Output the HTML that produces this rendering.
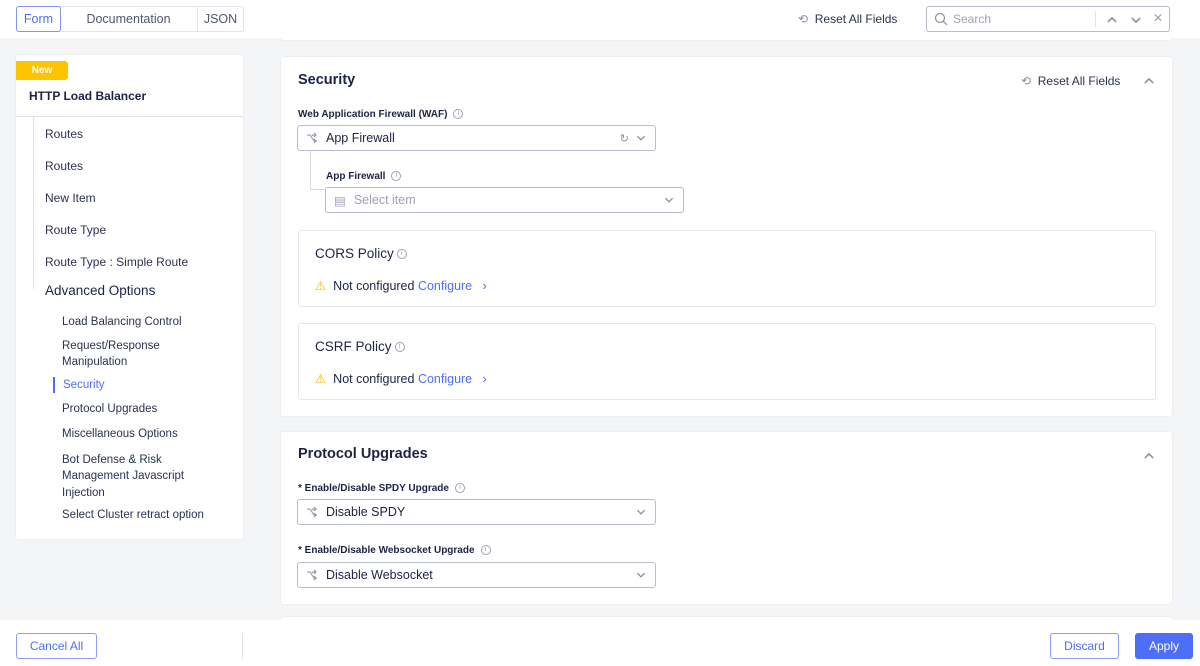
<!DOCTYPE html>
<html><head><style>
*{box-sizing:border-box;margin:0;padding:0}
body{width:1200px;height:666px;overflow:hidden;background:#f4f5f7;font-family:"Liberation Sans",sans-serif;color:#1c2345;position:relative;font-size:13px}
.abs{position:absolute}
.top{left:0;top:0;width:1200px;height:38px;background:#fff;z-index:1}
.tabs{left:16px;top:6px;height:26px;width:228px;border:1px solid #e3e5ea;border-radius:3px;display:flex;font-size:12.5px;color:#4f5672;z-index:2}
.tabs div{display:flex;align-items:center;justify-content:center}
.card{background:#fff;border-radius:3px;box-shadow:0 0 2px rgba(0,0,0,.08)}
.lbl{font-size:10px;font-weight:bold;color:#1c2345}
.sel{border:1px solid #b9bdc9;border-radius:3px;height:26px;display:flex;align-items:center;font-size:12.5px;padding-left:8px}
.info{display:inline-block;width:10px;height:10px;border:1px solid #9da2b3;border-radius:50%;font-size:7px;text-align:center;line-height:8px;color:#9da2b3;vertical-align:middle;margin-left:6px;font-weight:normal}
.nav{font-size:12px;color:#2b3250}
.btn{border:1px solid #8a9cf5;border-radius:3px;color:#4d6ef7;font-size:12px;display:flex;align-items:center;justify-content:center;background:#fff}
.z{z-index:2}
</style></head><body>
<svg width="0" height="0" style="position:absolute"><defs>
<symbol id="dn" viewBox="0 0 10 10"><path d="M2 3.5L5 6.5L8 3.5" stroke="#8a90a3" fill="none" stroke-width="1.1"/></symbol>
<symbol id="up" viewBox="0 0 10 10"><path d="M2 6.5L5 3.5L8 6.5" stroke="#8a90a3" fill="none" stroke-width="1.1"/></symbol>
<symbol id="sw" viewBox="0 0 12 12"><path d="M1 3h3l4 6h3M8 1l2 2-2 2M8 7l2 2-2 2M6 4l1-1h3" stroke="#8a90a3" fill="none" stroke-width="1"/></symbol>
</defs></svg>
<div class="abs top"></div>
<div class="abs tabs"><div style="width:45px;border:1px solid #7f97f7;color:#4d6ef7;margin:-1px;border-radius:3px">Form</div><div style="width:138px;border-right:1px solid #e3e5ea">Documentation</div><div style="flex:1">JSON</div></div>
<div class="abs z" style="left:798px;top:12px;font-size:12px;color:#2b3250"><span style="color:#8a90a3">⟲</span>&nbsp; Reset All Fields</div>
<div class="abs z" style="left:926px;top:6px;width:244px;height:26px;border:1px solid #b9bdc9;border-radius:3px;font-size:12px;color:#9da2b3">
<svg class="abs" style="left:7px;top:5px" width="14" height="14" viewBox="0 0 14 14"><circle cx="6" cy="6" r="4.5" stroke="#8a90a3" fill="none" stroke-width="1.2"/><path d="M9.5 9.5L13 13" stroke="#8a90a3" stroke-width="1.2"/></svg>
<span class="abs" style="left:26px;top:5px">Search</span>
<div class="abs" style="left:168px;top:4px;width:1px;height:16px;background:#e3e5ea"></div>
<svg class="abs" style="left:178px;top:6px" width="14" height="14"><use href="#up"/></svg>
<svg class="abs" style="left:202px;top:6px" width="14" height="14"><use href="#dn"/></svg>
<span class="abs" style="left:226px;top:4px;font-size:12px">✕</span></div>
<div class="abs card" style="left:281px;top:28px;width:891px;height:12px"></div>

<div class="abs card" style="left:16px;top:55px;width:227px;height:484px"></div>
<div class="abs" style="left:16px;top:61px;width:52px;height:19px;background:#fdc500;border-radius:0 3px 3px 0;color:#fff;font-weight:bold;font-size:10px;text-align:center;line-height:19px">New</div>
<div class="abs" style="left:29px;top:89px;font-weight:bold;font-size:12px">HTTP Load Balancer</div>
<div class="abs" style="left:16px;top:116px;width:227px;height:1px;background:#dfe1e7"></div>
<div class="abs" style="left:33px;top:117px;width:1px;height:172px;background:#dfe1e7"></div>
<div class="abs nav" style="left:45px;top:127px">Routes</div>
<div class="abs nav" style="left:45px;top:159px">Routes</div>
<div class="abs nav" style="left:45px;top:191px">New Item</div>
<div class="abs nav" style="left:45px;top:223px">Route Type</div>
<div class="abs nav" style="left:45px;top:255px">Route Type : Simple Route</div>
<div class="abs" style="left:45px;top:283px;font-size:13.5px">Advanced Options</div>
<div class="abs nav" style="left:62px;top:314px;font-size:11.5px;line-height:16px">Load Balancing Control</div>
<div class="abs nav" style="left:62px;top:338px;font-size:11.5px;line-height:16px">Request/Response<br>Manipulation</div>
<div class="abs" style="left:53px;top:377px;width:2px;height:16px;background:#4d6ef7"></div>
<div class="abs nav" style="left:63px;top:379px;font-size:11.5px;color:#4d6ef7">Security</div>
<div class="abs nav" style="left:62px;top:403px;font-size:11.5px">Protocol Upgrades</div>
<div class="abs nav" style="left:62px;top:428px;font-size:11.5px">Miscellaneous Options</div>
<div class="abs nav" style="left:62px;top:452px;font-size:11.5px;line-height:16.3px">Bot Defense &amp; Risk<br>Management Javascript<br>Injection</div>
<div class="abs nav" style="left:62px;top:509px;font-size:11.5px">Select Cluster retract option</div>

<div class="abs card" style="left:281px;top:57px;width:891px;height:359px"></div>
<div class="abs" style="left:298px;top:72px;font-size:14.5px;font-weight:bold">Security</div>
<div class="abs" style="left:1021px;top:74px;font-size:12px;color:#2b3250"><span style="color:#8a90a3">⟲</span>&nbsp; Reset All Fields</div>
<svg class="abs" style="left:1142px;top:74px" width="14" height="14"><use href="#up"/></svg>
<div class="abs lbl" style="left:298px;top:109px">Web Application Firewall (WAF)<span class="info">i</span></div>
<div class="abs sel" style="left:297px;top:125px;width:359px"><svg width="12" height="12" style="margin-right:8px"><use href="#sw"/></svg>App Firewall<span style="margin-left:auto;color:#8a90a3;font-size:11px;margin-right:6px">↻</span><svg width="12" height="12" style="margin-right:8px"><use href="#dn"/></svg></div>
<div class="abs" style="left:310px;top:151px;width:14px;height:39px;border-left:1px solid #d4d7df;border-bottom:1px solid #d4d7df"></div>
<div class="abs lbl" style="left:326px;top:171px">App Firewall<span class="info">i</span></div>
<div class="abs sel" style="left:325px;top:187px;width:359px;color:#9da2b3"><span style="margin-right:8px">▤</span>Select item<svg width="12" height="12" style="margin-left:auto;margin-right:8px"><use href="#dn"/></svg></div>
<div class="abs" style="left:298px;top:230px;width:858px;height:77px;border:1px solid #e5e7ec;border-radius:3px"></div>
<div class="abs" style="left:315px;top:246px;font-size:13.5px">CORS Policy<span class="info" style="margin-left:3px">i</span></div>
<div class="abs" style="left:315px;top:278px;font-size:12.5px"><span style="color:#f0b400">⚠</span>&nbsp; Not configured <span style="color:#4d6ef7">Configure&nbsp;&nbsp; ›</span></div>
<div class="abs" style="left:298px;top:323px;width:858px;height:77px;border:1px solid #e5e7ec;border-radius:3px"></div>
<div class="abs" style="left:315px;top:339px;font-size:13.5px">CSRF Policy<span class="info" style="margin-left:3px">i</span></div>
<div class="abs" style="left:315px;top:371px;font-size:12.5px"><span style="color:#f0b400">⚠</span>&nbsp; Not configured <span style="color:#4d6ef7">Configure&nbsp;&nbsp; ›</span></div>

<div class="abs card" style="left:281px;top:432px;width:891px;height:172px"></div>
<div class="abs" style="left:298px;top:446px;font-size:14.5px;font-weight:bold">Protocol Upgrades</div>
<svg class="abs" style="left:1142px;top:449px" width="14" height="14"><use href="#up"/></svg>
<div class="abs lbl" style="left:298px;top:483px">* Enable/Disable SPDY Upgrade<span class="info">i</span></div>
<div class="abs sel" style="left:297px;top:499px;width:359px"><svg width="12" height="12" style="margin-right:8px"><use href="#sw"/></svg>Disable SPDY<svg width="12" height="12" style="margin-left:auto;margin-right:8px"><use href="#dn"/></svg></div>
<div class="abs lbl" style="left:298px;top:545px">* Enable/Disable Websocket Upgrade<span class="info">i</span></div>
<div class="abs sel" style="left:297px;top:562px;width:359px"><svg width="12" height="12" style="margin-right:8px"><use href="#sw"/></svg>Disable Websocket<svg width="12" height="12" style="margin-left:auto;margin-right:8px"><use href="#dn"/></svg></div>
<div class="abs card" style="left:281px;top:617px;width:891px;height:20px"></div>

<div class="abs" style="left:0;top:620px;width:1200px;height:46px;background:#fff"></div>
<div class="abs btn" style="left:16px;top:633px;width:81px;height:26px">Cancel All</div>
<div class="abs" style="left:242px;top:633px;width:1px;height:26px;background:#dfe1e7"></div>
<div class="abs btn" style="left:1050px;top:633px;width:69px;height:26px">Discard</div>
<div class="abs btn" style="left:1135px;top:633px;width:58px;height:26px;background:#4d6ef7;color:#fff;border-color:#4d6ef7">Apply</div>
</body></html>
